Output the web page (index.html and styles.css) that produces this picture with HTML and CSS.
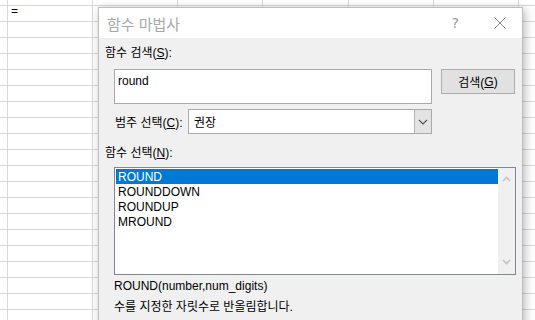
FILE: index.html
```html
<!DOCTYPE html>
<html lang="ko">
<head>
<meta charset="utf-8">
<title>함수 마법사</title>
<link rel="stylesheet" href="styles.css">
</head>
<body>
<div class="sheet">
  <div class="col c0"></div>
  <div class="col c1"><span class="cell">=</span></div>
  <div class="col c2"></div>
  <div class="col c3"></div>
  <div class="col c4"></div>
  <div class="col c5"></div>
  <div class="col c6"></div>
  <div class="col c7"></div>
</div>

<div class="dlg">
  <div class="titlebar">
    <span class="title">함수 마법사</span>
    <span class="help">?</span>
    <svg class="close" width="12" height="12" viewBox="0 0 12 12"><path d="M0.5 0.5 L11.5 11.5 M11.5 0.5 L0.5 11.5" stroke="#8a8a8a" stroke-width="1" fill="none"/></svg>
  </div>
  <div class="body">
    <div class="label">함수 검색(<u>S</u>):</div>
    <div class="search-row">
      <div class="textbox">round</div>
      <div class="button">검색(<u>G</u>)</div>
    </div>
    <div class="cat-row">
      <span class="cat-label">범주 선택(<u>C</u>):</span>
      <div class="select">
        <span class="select-val">권장</span>
        <span class="select-btn"><svg width="10" height="6" viewBox="0 0 10 6"><path d="M1 1 L5 5 L9 1" stroke="#555" stroke-width="1.2" fill="none"/></svg></span>
      </div>
    </div>
    <div class="label label2">함수 선택(<u>N</u>):</div>
    <div class="listbox">
      <div class="items">
        <div class="item sel">ROUND</div>
        <div class="item">ROUNDDOWN</div>
        <div class="item">ROUNDUP</div>
        <div class="item">MROUND</div>
      </div>
      <div class="scroll">
        <svg width="9" height="6" viewBox="0 0 9 6"><path d="M1 5 L4.5 1.5 L8 5" stroke="#c2c2c2" stroke-width="1.6" fill="none"/></svg>
        <svg width="9" height="6" viewBox="0 0 9 6"><path d="M1 1 L4.5 4.5 L8 1" stroke="#c2c2c2" stroke-width="1.6" fill="none"/></svg>
      </div>
    </div>
    <div class="desc">
      <div>ROUND(number,num_digits)</div>
      <div>수를 지정한 자릿수로 반올림합니다.</div>
    </div>
  </div>
</div>
</body>
</html>
```
FILE: styles.css
```css
* { box-sizing: border-box; }
html, body { margin: 0; padding: 0; }
body {
  width: 535px;
  height: 320px;
  overflow: hidden;
  position: relative;
  background: #fff;
  font-family: "Liberation Sans", "Noto Sans CJK KR", sans-serif;
  font-size: 12px;
  color: #000;
}
.sheet {
  display: flex;
  height: 320px;
  background-image: linear-gradient(to bottom, transparent 15px, #d8d8d8 15px);
  background-size: 100% 16px;
  background-position: 0 6px;
}
.col { border-right: 1px solid #d8d8d8; height: 100%; flex: none; }
.c0 { width: 8px; }
.c1, .c2, .c3, .c5, .c6 { width: 85px; }
.c4 { width: 86px; }
.c7 { flex: 1; border-right: none; }
.cell { display: block; padding: 4px 0 0 3px; line-height: 14px; font-size: 12px; }

.dlg {
  position: absolute;
  left: 98px;
  top: 7px;
  width: 425px;
  height: 330px;
  border: 1px solid #bdbdbd;
  background: #f0f0f0;
  box-shadow: 2px 2px 9px rgba(0,0,0,0.28);
}
.titlebar {
  height: 30px;
  background: #fff;
  display: flex;
  align-items: center;
  padding-left: 8px;
}
.title {
  font-size: 15px;
  color: #a8a8a8;
  flex: 1;
}
.help {
  font-family: "DejaVu Sans", sans-serif;
  font-size: 14px;
  color: #999;
  margin-right: 35px;
}
.close { margin-right: 16px; }

.body {
  padding: 7px 0 0 6px;
  display: flex;
  flex-direction: column;
}
.label { line-height: 16px; height: 16px; }
.search-row {
  display: flex;
  margin: 8px 0 0 9px;
  gap: 9px;
}
.textbox {
  width: 318px;
  height: 35px;
  background: #fff;
  border: 1px solid #a9a9a9;
  padding: 3px 0 0 3px;
  line-height: 16px;
}
.button {
  width: 74px;
  height: 25px;
  background: #e1e1e1;
  border: 1px solid #adadad;
  display: flex;
  align-items: center;
  justify-content: center;
}
.cat-row {
  display: flex;
  align-items: center;
  margin: 5px 0 0 10px;
  height: 25px;
}
.cat-label { width: 73px; }
.select {
  width: 244px;
  height: 25px;
  border: 1px solid #a9a9a9;
  background: #fff;
  display: flex;
  align-items: center;
}
.select-val { flex: 1; padding-left: 5px; }
.select-btn {
  width: 17px;
  height: 100%;
  background: #e3e3e3;
  border-left: 1px solid #b5b5b5;
  display: flex;
  align-items: center;
  justify-content: center;
}
.label2 { margin-top: 11px; }
.listbox {
  margin: 6px 0 0 9px;
  width: 402px;
  height: 108px;
  border: 1px solid #828790;
  background: #fff;
  display: flex;
}
.items { flex: 1; padding: 1px 0 0 1px; }
.item { height: 15px; line-height: 13px; padding: 2px 0 0 2px; }
.item.sel { background: #0078d7; color: #fff; }
.scroll {
  width: 17px;
  background: #f0f0f0;
  display: flex;
  flex-direction: column;
  justify-content: space-between;
  align-items: center;
  padding: 8px 0 9px;
}
.desc { margin-left: 9px; line-height: 21px; padding-top: 1px; }
```
